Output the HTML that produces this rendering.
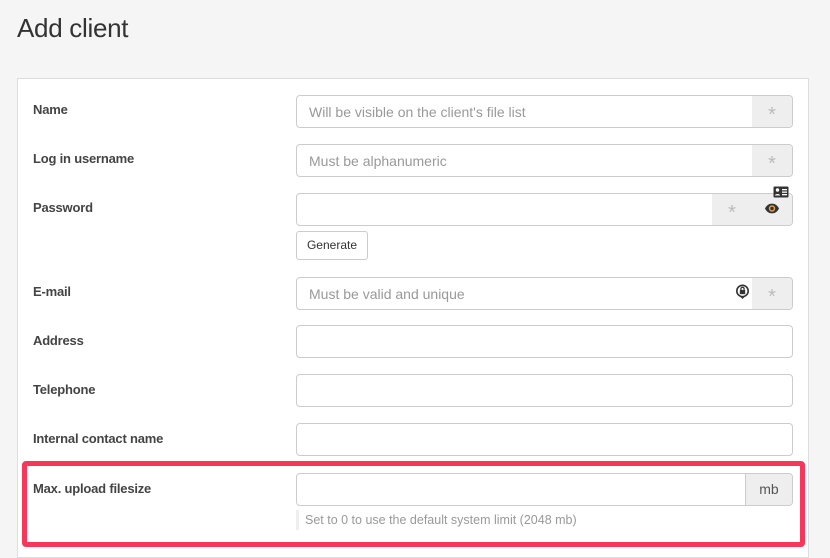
<!DOCTYPE html>
<html><head><meta charset="utf-8"><style>
*{box-sizing:border-box}
body{margin:0;width:830px;height:552px;background:#f5f5f5;font-family:"Liberation Sans",sans-serif;overflow:hidden;position:relative}
h1{position:absolute;left:17px;top:13px;margin:0;font-weight:normal;font-size:26px;color:#333;letter-spacing:-0.3px}
.panel{position:absolute;left:17px;top:78px;width:792px;height:480px;background:#fff;border:1px solid #ddd}
.lbl{position:absolute;left:33px;font-size:13px;font-weight:bold;color:#444;letter-spacing:-0.2px}
.inp{position:absolute;left:296px;width:497px;height:33px;border:1px solid #ccc;border-radius:4px;background:#fff;font-size:14px;color:#999;padding:8px 12px;overflow:hidden}
.ad{position:absolute;top:0;bottom:0;background:#eee;color:#bbb;text-align:center;font-size:20px;line-height:38px}
.btn{position:absolute;left:296px;top:231px;width:72px;height:29px;border:1px solid #ccc;border-radius:3px;background:#fff;font-size:12px;line-height:27px;text-align:center;color:#333}
.red{position:absolute;left:22px;top:461px;width:783px;height:86px;border:5px solid #f7365a;border-radius:4px}
.help{position:absolute;left:296px;top:510px;border-left:3px solid #eee;padding-left:6px;font-size:12.5px;color:#999;line-height:20px}
</style></head><body>
<h1>Add client</h1>
<div class="panel"></div>
<div class="lbl" style="top:102px">Name</div>
<div class="inp" style="top:95px">Will be visible on the client's file list<div class="ad" style="right:0;width:40px">*</div></div>
<div class="lbl" style="top:151px">Log in username</div>
<div class="inp" style="top:144px">Must be alphanumeric<div class="ad" style="right:0;width:40px">*</div></div>
<div class="lbl" style="top:200px">Password</div>
<div class="inp" style="top:193px"><div class="ad" style="right:40px;width:40px">*</div><div class="ad" style="right:0;width:40px"></div></div>
<svg style="position:absolute;left:773px;top:186px" width="16" height="12" viewBox="0 0 16 12"><rect x="0.5" y="0.5" width="15" height="11" rx="1" fill="#333"/><circle cx="4.5" cy="4" r="1.7" fill="#fff"/><path d="M2 9.5c0-2 5-2 5 0z" fill="#fff"/><rect x="9" y="3" width="5" height="1.3" fill="#fff"/><rect x="9" y="5.5" width="5" height="1.3" fill="#fff"/><rect x="9" y="8" width="5" height="1.3" fill="#fff"/></svg>
<svg style="position:absolute;left:764px;top:202px" width="16" height="13" viewBox="0 0 16 13"><path d="M1 6.5C4 0 12 0 15 6.5C12 13 4 13 1 6.5Z" fill="#333"/><circle cx="8" cy="6.5" r="3.2" fill="#e0a050"/><circle cx="8" cy="6.5" r="1.7" fill="#333"/></svg>
<div class="btn">Generate</div>
<div class="lbl" style="top:284px">E-mail</div>
<div class="inp" style="top:277px">Must be valid and unique<div class="ad" style="right:0;width:40px">*</div></div>
<svg style="position:absolute;left:735px;top:284px" width="15" height="15" viewBox="0 0 14 14"><circle cx="7" cy="6.5" r="5.3" fill="none" stroke="#333" stroke-width="1.5"/><rect x="4.5" y="5.5" width="5" height="4" fill="#333"/><path d="M5.5 5.5v-1a1.5 1.5 0 0 1 3 0v1" fill="none" stroke="#333" stroke-width="1.2"/><path d="M5 12l2 2 2-2" fill="#333"/></svg>
<div class="lbl" style="top:333px">Address</div>
<div class="inp" style="top:325px"></div>
<div class="lbl" style="top:382px">Telephone</div>
<div class="inp" style="top:374px"></div>
<div class="lbl" style="top:431px">Internal contact name</div>
<div class="inp" style="top:423px"></div>
<div class="red"></div>
<div class="lbl" style="top:481px">Max. upload filesize</div>
<div class="inp" style="top:473px"><div class="ad" style="right:0;width:47px;color:#555;font-size:14px;line-height:31px;border-left:1px solid #ccc">mb</div></div>
<div class="help">Set to 0 to use the default system limit (2048 mb)</div>
</body></html>
